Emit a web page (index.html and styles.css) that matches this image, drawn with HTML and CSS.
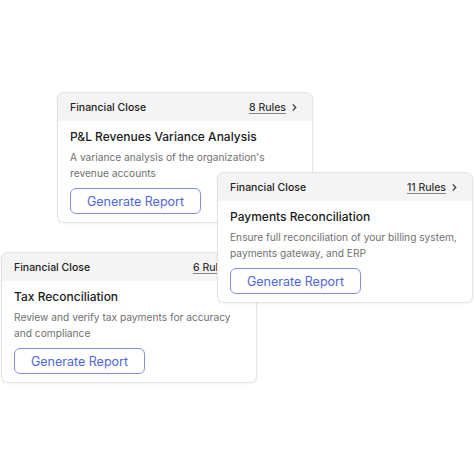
FILE: index.html
```html
<!DOCTYPE html>
<html>
<head>
<meta charset="utf-8">
<link rel="stylesheet" href="styles.css">
</head>
<body>
<div class="canvas">
  <div class="card card-a">
    <div class="card-head">
      <span class="cat">Financial Close</span>
      <span class="rules"><u>8 Rules</u><svg class="chev" viewBox="0 0 8 10" width="7" height="9"><path d="M2 1.5 L5.5 5 L2 8.5" fill="none" stroke="#333" stroke-width="1.3"/></svg></span>
    </div>
    <div class="card-body">
      <div class="title">P&amp;L Revenues Variance Analysis</div>
      <div class="desc">A variance analysis of the organization's revenue accounts</div>
      <button class="btn">Generate Report</button>
    </div>
  </div>
  <div class="card card-c">
    <div class="card-head">
      <span class="cat">Financial Close</span>
      <span class="rules"><u>6 Rules</u><svg class="chev" viewBox="0 0 8 10" width="7" height="9"><path d="M2 1.5 L5.5 5 L2 8.5" fill="none" stroke="#333" stroke-width="1.3"/></svg></span>
    </div>
    <div class="card-body">
      <div class="title">Tax Reconciliation</div>
      <div class="desc">Review and verify tax payments for accuracy and compliance</div>
      <button class="btn">Generate Report</button>
    </div>
  </div>
  <div class="card card-b">
    <div class="card-head">
      <span class="cat">Financial Close</span>
      <span class="rules"><u>11 Rules</u><svg class="chev" viewBox="0 0 8 10" width="7" height="9"><path d="M2 1.5 L5.5 5 L2 8.5" fill="none" stroke="#333" stroke-width="1.3"/></svg></span>
    </div>
    <div class="card-body">
      <div class="title">Payments Reconciliation</div>
      <div class="desc">Ensure full reconciliation of your billing system, payments gateway, and ERP</div>
      <button class="btn">Generate Report</button>
    </div>
  </div>
</div>
</body>
</html>
```
FILE: styles.css
```css
html, body {
  margin: 0;
  padding: 0;
  background: #ffffff;
}
.canvas {
  position: relative;
  width: 474px;
  height: 474px;
  font-family: "Inter", "Noto Sans", sans-serif;
}
.card {
  position: absolute;
  width: 254px;
  height: 129px;
  box-sizing: content-box;
  border: 1px solid #e3e3e6;
  border-radius: 7px;
  background: #ffffff;
  box-shadow: 0 1px 3px rgba(0,0,0,0.05);
  overflow: hidden;
  display: flex;
  flex-direction: column;
}
.card-a { left: 57px; top: 92px; }
.card-b { left: 217px; top: 172px; }
.card-c { left: 1px; top: 252px; }
.card-head {
  height: 28px;
  background: #f5f4f4;
  display: flex;
  align-items: center;
  justify-content: space-between;
  padding: 0 14px 0 12px;
  font-size: 10.5px;
  font-weight: 500;
  color: #222;
}
.rules {
  display: flex;
  align-items: center;
  gap: 5px;
  color: #333;
}
.rules u {
  text-decoration-color: #888;
  text-underline-offset: 2px;
}
.card-body {
  padding: 7px 10px 0 12px;
  display: flex;
  flex-direction: column;
  align-items: flex-start;
}
.title {
  font-size: 12px;
  font-weight: 500;
  line-height: 18px;
  color: #1b1b1b;
}
.desc {
  margin-top: 3px;
  font-size: 10.2px;
  line-height: 16px;
  color: #707070;
}
.btn {
  margin-top: 7px;
  width: 131px;
  height: 26px;
  border: 1px solid #8091e4;
  border-radius: 6px;
  background: #fff;
  color: #4f66d9;
  font-family: inherit;
  font-size: 12.5px;
  padding: 0;
}
```
